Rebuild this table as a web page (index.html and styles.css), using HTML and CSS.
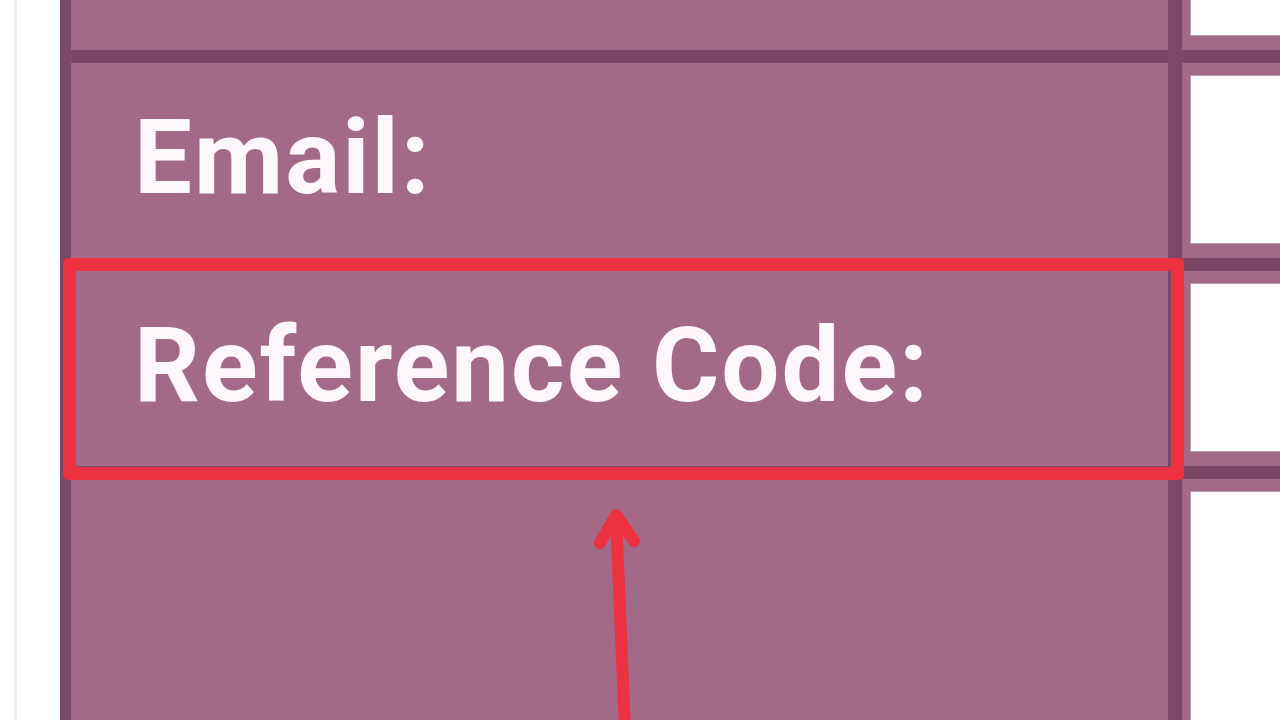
FILE: index.html
```html
<!DOCTYPE html>
<html>
<head>
<meta charset="utf-8">
<link rel="stylesheet" href="styles.css">
</head>
<body>
<div class="page">
  <div class="gutter"></div>
  <div class="sheet">
    <div class="row">
      <div class="label"></div>
      <div class="field"><div class="input"></div></div>
    </div>
    <div class="row">
      <div class="label"><span>Email:</span></div>
      <div class="field"><div class="input"></div></div>
    </div>
    <div class="row">
      <div class="label"><span>Reference Code:</span></div>
      <div class="field"><div class="input"></div></div>
    </div>
    <div class="row row-last">
      <div class="label"></div>
      <div class="field"><div class="input"></div></div>
    </div>
  </div>
</div>
<div class="highlight"></div>
<svg class="arrow" width="1280" height="720" viewBox="0 0 1280 720">
  <path d="M625 730 L616 516" />
  <path d="M600 543 L616 515 L634 541" />
</svg>
</body>
</html>
```
FILE: styles.css
```css
html, body {
  margin: 0;
  padding: 0;
  background: #ffffff;
  width: 1280px;
  height: 720px;
  overflow: hidden;
}
.page {
  display: flex;
  width: 1280px;
  height: 720px;
  overflow: hidden;
}
.gutter {
  flex: 0 0 46px;
  margin-left: 14px;
  border-left: 3px solid #ededed;
  box-sizing: border-box;
}
.sheet {
  flex: 1 1 auto;
  min-width: 0;
  margin-top: -145px;
  background: #7c4867;
  padding-left: 11px;
  display: flex;
  flex-direction: column;
  gap: 13px;
}
.row {
  display: grid;
  grid-template-columns: 1097px 1fr;
  column-gap: 14px;
  height: 195px;
  flex: 0 0 auto;
}
.row-last {
  height: 260px;
}
.label {
  background: #a26a87;
  padding: 43px 0 0 63px;
  font-family: Roboto, "Liberation Sans", sans-serif;
  font-weight: 700;
  font-size: 103px;
  line-height: 103px;
  letter-spacing: 2px;
  color: #fdf7fb;
  white-space: nowrap;
  overflow: hidden;
}
.field {
  background: #a26a87;
  padding: 12px 0 14px 8px;
  display: flex;
  min-width: 0;
}
.input {
  flex: 1;
  background: #ffffff;
  border: 1px solid #b89aac;
  border-right: none;
}
.highlight {
  position: absolute;
  left: 63px;
  top: 258px;
  width: 1121px;
  height: 222px;
  box-sizing: border-box;
  border: 13px solid #ec3141;
  border-radius: 5px;
}
.arrow {
  position: absolute;
  left: 0;
  top: 0;
}
.arrow path {
  fill: none;
  stroke: #ec3141;
  stroke-width: 12;
  stroke-linecap: round;
  stroke-linejoin: round;
}
```
